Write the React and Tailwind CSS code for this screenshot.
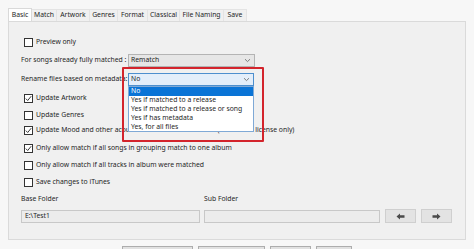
import React from "react";

const tabs = [
  { name: "Basic", w: "w-[24px]", active: true },
  { name: "Match", w: "w-[25px]" },
  { name: "Artwork", w: "w-[33px]" },
  { name: "Genres", w: "w-[28px]" },
  { name: "Format", w: "w-[30px]" },
  { name: "Classical", w: "w-[32px]" },
  { name: "File Naming", w: "w-[44px]" },
  { name: "Save", w: "w-[23px]" },
];

const options = [
  "No",
  "Yes if matched to a release",
  "Yes if matched to a release or song",
  "Yes if has metadata",
  "Yes, for all files",
];

const Chevron = () => (
  <svg width="7" height="5" viewBox="0 0 7 5" className="shrink-0">
    <path d="M1 1.2 L3.5 3.6 L6 1.2" fill="none" stroke="#707070" strokeWidth="0.9" />
  </svg>
);

const CheckBox = ({ checked, label, mt }) => (
  <div className={`flex items-center h-[10px] ml-[3px] ${mt}`}>
    <div className="w-[9px] h-[9px] border border-[#333333] bg-white flex items-center justify-center shrink-0">
      {checked && (
        <svg width="7" height="7" viewBox="0 0 7 7">
          <path d="M0.8 3.6 L2.7 5.5 L6.2 1.2" fill="none" stroke="#222222" strokeWidth="0.9" />
        </svg>
      )}
    </div>
    <span className="ml-[3px] whitespace-nowrap">{label}</span>
  </div>
);

const Arrow = ({ dir }) => (
  <svg width="9" height="7" viewBox="0 0 9 7">
    {dir === "left" ? (
      <path d="M0.5 3.5 L4 0.5 L4 2.2 L8.5 2.2 L8.5 4.8 L4 4.8 L4 6.5 Z" fill="#4a4a4a" />
    ) : (
      <path d="M8.5 3.5 L5 0.5 L5 2.2 L0.5 2.2 L0.5 4.8 L5 4.8 L5 6.5 Z" fill="#4a4a4a" />
    )}
  </svg>
);

export default function App() {
  return (
    <div
      className="relative w-[474px] h-[249px] overflow-hidden bg-[#f7f7f7] text-[#1e1e1e] text-[6.8px] leading-none pt-[8px] pl-[8px]"
      style={{ fontFamily: '"Noto Sans", "Open Sans", sans-serif' }}
    >
      {/* tab strip */}
      <div className="flex items-end h-[13px]">
        {tabs.map((t) => (
          <div
            key={t.name}
            className={`${t.w} flex items-center justify-center whitespace-nowrap border border-b-0 ${
              t.active
                ? "h-[13px] bg-white border-[#d9d9d9]"
                : "h-[12px] bg-[#f0f0f0] border-[#e4e4e4] border-l-0"
            }`}
          >
            {t.name}
          </div>
        ))}
      </div>

      {/* tab pane */}
      <div className="w-[458px] h-[219px] border border-[#dadada] bg-[#f0f0f0] pl-[12px] pt-[15px]">
        <div className="flex items-center h-[10px] ml-[3px]">
          <div className="w-[9px] h-[9px] border border-[#333333] bg-white shrink-0" />
          <span className="ml-[3px]">Preview only</span>
        </div>

        <div className="flex items-center mt-[7px] h-[13px]">
          <span className="w-[107px] whitespace-nowrap">For songs already fully matched :</span>
          <div className="w-[127px] h-[13px] border border-[#b4b4b4] bg-[#e6e6e6] flex items-center justify-between pl-[2px] pr-[3px]">
            <span>Rematch</span>
            <Chevron />
          </div>
        </div>

        <div className="flex items-center mt-[6px] h-[13px]">
          <span className="w-[107px] whitespace-nowrap">Rename files based on metadata:</span>
          <div className="w-[126px] h-[13px] border border-[#4d8fce] bg-[#e3eefa] flex items-center justify-between pl-[2px] pr-[3px]">
            <span>No</span>
            <Chevron />
          </div>
        </div>

        <CheckBox checked label="Update Artwork" mt="mt-[7px]" />
        <CheckBox label="Update Genres" mt="mt-[7px]" />
        <CheckBox
          checked
          label="Update Mood and other acoustic attributes such as BPM (Pro/Studio license only)"
          mt="mt-[5px]"
        />
        <CheckBox checked label="Only allow match if all songs in grouping match to one album" mt="mt-[8px]" />
        <CheckBox label="Only allow match if all tracks in album were matched" mt="mt-[7px]" />
        <CheckBox label="Save changes to iTunes" mt="mt-[7px]" />

        <div className="flex items-center h-[10px] mt-[7px]">
          <span className="w-[183px]">Base Folder</span>
          <span>Sub Folder</span>
        </div>

        <div className="flex items-center mt-[5px] h-[14px]">
          <div className="w-[179px] h-[13px] border border-[#c8c8c8] bg-[#ececec] flex items-center pl-[3px]">
            E:\Test1
          </div>
          <div className="w-[176px] h-[13px] ml-[4px] border border-[#c8c8c8] bg-[#ececec]" />
          <div className="w-[31px] h-[14px] ml-[5px] border border-[#cfcfcf] bg-[#e3e3e3] flex items-center justify-center">
            <Arrow dir="left" />
          </div>
          <div className="w-[31px] h-[14px] ml-[5px] border border-[#cfcfcf] bg-[#e3e3e3] flex items-center justify-center">
            <Arrow dir="right" />
          </div>
        </div>
      </div>

      {/* dialog buttons */}
      <div className="flex mt-[6px] ml-[114px] gap-[5px]">
        <div className="w-[71px] h-[12px] border border-[#adadad] bg-[#e1e1e1]" />
        <div className="w-[67px] h-[12px] border border-[#adadad] bg-[#e1e1e1]" />
        <div className="w-[41px] h-[12px] border border-[#adadad] bg-[#e1e1e1]" />
        <div className="w-[36px] h-[12px] border border-[#adadad] bg-[#e1e1e1]" />
      </div>

      {/* open dropdown list */}
      <div className="absolute left-[128px] top-[86px] w-[126px] h-[46px] border border-[#7fa9d6] bg-white">
        {options.map((o, i) => (
          <div
            key={o}
            className={`h-[9px] flex items-center pl-[2px] whitespace-nowrap ${
              i === 0 ? "bg-[#0a74d6] text-white" : ""
            }`}
          >
            {o}
          </div>
        ))}
      </div>

      {/* red annotation box */}
      <div className="absolute left-[122px] top-[67px] w-[142px] h-[75px] border-[2px] border-[#d3242c] rounded-[1px]" />
    </div>
  );
}
